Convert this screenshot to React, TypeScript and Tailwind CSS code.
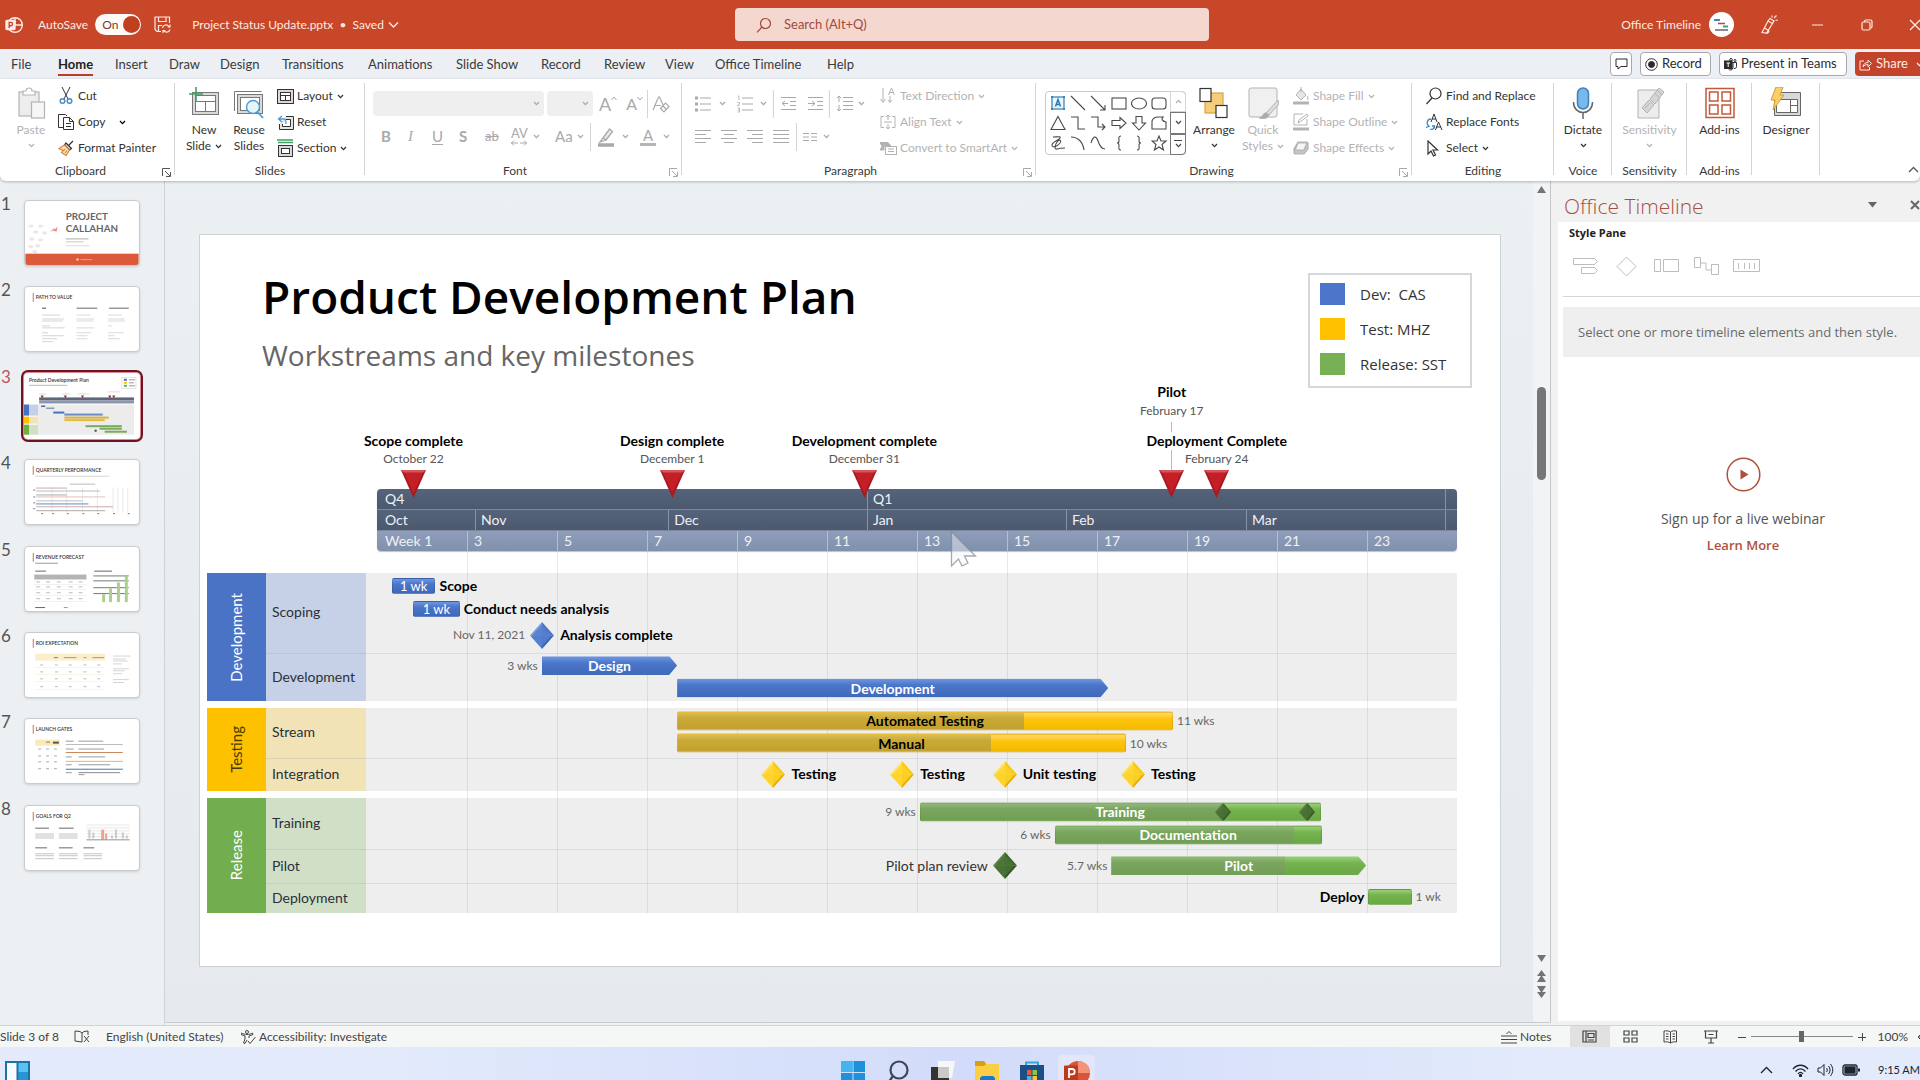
import React from "react";
import type { ReactNode } from "react";

/* ---------- small helpers ---------- */

function Ico({ w, h, sw = 1, className = "", children }: { w: number; h: number; sw?: number; className?: string; children: ReactNode }) {
  return (
    <svg
      width={w}
      height={h}
      viewBox={`0 0 ${w} ${h}`}
      fill="none"
      stroke="currentColor"
      strokeWidth={sw}
      className={`shrink-0 ${className}`}
      aria-hidden="true"
    >
      {children}
    </svg>
  );
}

const Chev = ({ className = "" }: { className?: string }) => (
  <Ico w={7} h={5} sw={1.3} className={className}>
    <path d="M1 1l2.5 2.6L6 1" />
  </Ico>
);

const Launcher = ({ dim }: { dim?: boolean }) => (
  <button aria-label="Dialog launcher" className={`absolute right-1 bottom-1 ${dim ? "text-[#a8a8a8]" : "text-[#555]"}`}>
    <Ico w={9} h={9}>
      <path d="M.5 8V.5H8M3 3l5 5M8.5 4v4.5H4" />
    </Ico>
  </button>
);

function Group({ label, className, launcher, children }: { label: string; className: string; launcher?: "on" | "dim"; children?: ReactNode }) {
  return (
    <section aria-label={label} className={`relative flex shrink-0 flex-col pt-1 ${className}`}>
      <div className="flex h-[79px]">{children}</div>
      <div className="h-[18px] text-center text-xs leading-[18px] text-[#3a3a3a]">{label}</div>
      {launcher && <Launcher dim={launcher === "dim"} />}
      <span className="absolute top-1 right-0 h-[92px] w-px bg-[#d4d4d4]" />
    </section>
  );
}

function Row({ icon, text, chev, dim }: { icon: ReactNode; text: string; chev?: boolean; dim?: boolean }) {
  return (
    <button className={`flex h-[26px] items-center whitespace-nowrap text-xs ${dim ? "text-[#b3b3b3]" : "text-[#333]"}`}>
      <span className="flex w-5 shrink-0 items-center">{icon}</span>
      {text}
      {chev && <Chev className="ml-1" />}
    </button>
  );
}

function Big({ icon, lines, chevLine, chevBelow, dim, className }: { icon: ReactNode; lines: string[]; chevLine?: boolean; chevBelow?: boolean; dim?: boolean; className: string }) {
  return (
    <button className={`flex shrink-0 flex-col items-center pt-1 text-xs leading-4 ${dim ? "text-[#b3b3b3]" : "text-[#333]"} ${className}`}>
      <span className="mb-[3px] flex h-8 items-center">{icon}</span>
      {lines.map((l, i) => (
        <span key={l} className="flex items-center whitespace-nowrap">
          {l}
          {chevLine && i === lines.length - 1 && <Chev className="ml-1" />}
        </span>
      ))}
      {chevBelow && <Chev className="mt-[5px]" />}
    </button>
  );
}

/* ---------- title bar ---------- */

function TitleBar() {
  return (
    <header className="grid h-[49px] shrink-0 grid-cols-[735fr_474fr_711fr] bg-[#c74728] text-xs text-[#fdeae4]">
      <div className="flex items-center pl-[5px]">
        <Ico w={18} h={18} sw={1.4}>
          <circle cx="10" cy="9" r="7.3" />
          <path d="M10 1.7V9h7.3" />
          <rect x="1" y="4.5" width="9" height="9" rx="1" fill="#fdeae4" />
          <path d="M4.2 12V6.4h1.7a1.6 1.6 0 010 3.3H4.2" stroke="#c74728" />
        </Ico>
        <span className="ml-[15px]">AutoSave</span>
        <button role="switch" aria-checked="true" className="ml-[7px] flex h-[21px] w-[46px] items-center justify-between rounded-full bg-[#fffaf8] pr-px pl-[7px] text-[#7c3a2a]">
          On
          <span className="size-[17px] rounded-full bg-[#c03f20]" />
        </button>
        <button aria-label="Save" className="ml-[13px]">
          <Ico w={18} h={18} sw={1.2}>
            <path d="M7 15.5H3L1 13.5V1h14.5v6M4.5 1v4.5H12V1M4.500 15.500V9.500H8" />
            <path d="M8.500 12a3.500 3.500 0 016.300-1.700M16 8.500v2.300h-2.300M16 13.300a3.500 3.500 0 01-6.200 1.400M9 17v-2.300h2.300" />
          </Ico>
        </button>
        <span className="ml-5">Project Status Update.pptx&nbsp; • &nbsp;Saved</span>
        <Ico w={11} h={8} sw={1.5} className="ml-1">
          <path d="M1 1.500l4.500 4.500L10 1.500" />
        </Ico>
      </div>
      <label className="mt-2 flex h-[33px] items-center rounded-[4px] bg-[#f4d8d0] pl-[21px] text-[#a3493c]">
        <Ico w={16} h={16} sw={1.2}>
          <circle cx="9.500" cy="6.500" r="5" />
          <path d="M6 10l-5 5.300" />
        </Ico>
        <input aria-label="Search" placeholder="Search (Alt+Q)" className="ml-3 w-full bg-transparent text-[13px] outline-none placeholder:text-[#a3493c]" />
      </label>
      <div className="flex items-center justify-end overflow-hidden">
        <span>Office Timeline</span>
        <span className="ml-2 flex size-[25px] items-center justify-center rounded-full bg-white">
          <Ico w={17} h={15}>
            <path d="M1 3h6" stroke="#3a8fc0" strokeWidth="2" />
            <path d="M5 6.500h7" stroke="#b9423a" strokeWidth="1.500" />
            <path d="M10 9.500h5" stroke="#41a07c" strokeWidth="2" />
            <path d="M2 13h13" stroke="#666" strokeWidth="1.500" />
          </Ico>
        </span>
        <button aria-label="Coming soon" className="ml-[26px]">
          <Ico w={18} h={20} sw={1.200}>
            <path d="M2 17.500L8 6l4.500 2.500-6 9.500zM4.500 13l4 2.500M5.500 18c2 1 4-1 3-3M8 6l2-2.500 4 2.500-1.500 2.500M12 2.500V.500M14 3l2.500-2.500M15.500 5.500l2.500-.5" />
          </Ico>
        </button>
        <button aria-label="Minimize" className="ml-[34px]">
          <Ico w={11} h={10}><path d="M0 5h11" /></Ico>
        </button>
        <button aria-label="Restore" className="ml-[38px]">
          <Ico w={12} h={12} sw={1.2}>
            <rect x="1" y="3" width="8" height="8" rx="1.500" />
            <path d="M3.500 3V2.200A1.400 1.400 0 015 1h4.500A1.500 1.500 0 0111 2.500V7.500a1.400 1.400 0 01-1.500 1.500" />
          </Ico>
        </button>
        <button aria-label="Close" className="-mr-px ml-9">
          <Ico w={12} h={12} sw={1.3}><path d="M1 1l10 10M11 1L1 11" /></Ico>
        </button>
      </div>
    </header>
  );
}

/* ---------- ribbon tabs ---------- */

const TABS: [string, string][] = [
  ["File", "w-[47px]"],
  ["Home", "w-[57px]"],
  ["Insert", "w-[54px]"],
  ["Draw", "w-[51px]"],
  ["Design", "w-[62px]"],
  ["Transitions", "w-[86px]"],
  ["Animations", "w-[88px]"],
  ["Slide Show", "w-[85px]"],
  ["Record", "w-[63px]"],
  ["Review", "w-[61px]"],
  ["View", "w-[50px]"],
  ["Office Timeline", "w-[112px]"],
  ["Help", "w-[50px]"],
];

function TabRow() {
  return (
    <div className="flex h-[30px] shrink-0 items-center justify-between overflow-hidden bg-[#eceff3] text-[13px] text-[#3b3b3b]">
      <nav className="flex pt-[3px] pl-[11px]">
        {TABS.map(([name, w]) => (
          <button key={name} className={`flex shrink-0 whitespace-nowrap ${w}`}>
            <span className={name === "Home" ? "border-b-2 border-[#b83b2e] font-bold text-[#222]" : "border-b-2 border-transparent"}>{name}</span>
          </button>
        ))}
      </nav>
      <div className="-mr-2 flex gap-2 text-[#2b2b2b]">
        <button aria-label="Comments" className="flex h-6 w-[22px] items-center justify-center rounded-[4px] border border-[#a9a9a9] bg-white">
          <Ico w={13} h={12}><path d="M1 1h11v7.500H6L3 11V8.500H1z" /></Ico>
        </button>
        <button className="flex h-6 items-center gap-1 rounded-[4px] border border-[#a9a9a9] bg-white px-1">
          <Ico w={13} h={13}>
            <circle cx="6.500" cy="6.500" r="5.800" />
            <circle cx="6.500" cy="6.500" r="3" fill="currentColor" />
          </Ico>
          <span className="w-11 text-left">Record</span>
        </button>
        <button className="flex h-6 w-[128px] items-center gap-1 rounded-[4px] border border-[#a9a9a9] bg-white px-1 whitespace-nowrap">
          <Ico w={13} h={13}>
            <rect x=".5" y="3" width="7.500" height="7.500" fill="currentColor" />
            <path d="M2.500 5h3.500M4.200 5v4" stroke="#fff" />
            <circle cx="7" cy="1.800" r="1.300" />
            <circle cx="11" cy="2.500" r="1" />
            <path d="M8 4.500h4.500v4a2 2 0 01-2.500 2M9 4.500v5.500a2.500 2.500 0 01-4.500 1" />
          </Ico>
          Present in Teams
        </button>
        <button className="flex h-6 w-[73px] items-center gap-1 rounded-[4px] bg-[#c4432b] px-1 text-[#fdeae4]">
          <Ico w={13} h={13}>
            <path d="M5 3H1v9h9.500V9M4 9c.3-3 2-4.500 5-4.500V2L12.500 5.500 9 8.800V6.500C7 6.500 5.300 7.200 4 9z" />
          </Ico>
          Share
          <Chev className="ml-1" />
        </button>
      </div>
    </div>
  );
}

/* ---------- ribbon ---------- */

const Sep = ({ className = "" }: { className?: string }) => <span className={`h-7 w-px shrink-0 bg-[#d4d4d4] ${className}`} />;

function Combo({ label, className }: { label: string; className: string }) {
  return (
    <span className={`flex h-[25px] shrink-0 items-center rounded-[4px] bg-[#efefef] pr-1 ${className}`}>
      <select aria-label={label} className="h-full min-w-0 flex-1 appearance-none bg-transparent outline-none" />
      <Chev />
    </span>
  );
}

const AlignIcon = ({ mid }: { mid: string }) => (
  <Ico w={16} h={15}>
    <path d={`M0 1.500h16M0 9.500h16 ${mid}`} />
  </Ico>
);

const SHAPES: ReactNode[] = [
  <><rect x="2" y="2" width="12" height="12" stroke="#3f87b8" fill="#eaf4fb" strokeWidth="1.300" /><path d="M5.500 11.500L8 4.500l2.500 7M6.300 9.500h3.400" stroke="#2b79ae" strokeWidth="1.500" /><path d="M1 1h2v2H1zM13 1h2v2h-2zM1 13h2v2H1zM13 13h2v2h-2z" fill="#3f87b8" stroke="none" /></>,
  <path d="M1 1l14 14" />,
  <path d="M1 1l14 14M15 10v5h-5" />,
  <rect x="1" y="3" width="14" height="11" />,
  <ellipse cx="8" cy="8.500" rx="7.500" ry="5.500" />,
  <rect x="1" y="3" width="14" height="11" rx="3" />,
  <path d="M8 1.500L15 14.500H1z" />,
  <path d="M1 2h7v12h7" />,
  <path d="M1 2h7v10h7M12 9l3 3-3 3" />,
  <path d="M1 5.500h8V2.500L15 8l-6 5.500v-3H1z" />,
  <path d="M5 1.500h6V8h3.500L8 15 1.500 8H5z" />,
  <path d="M1 14V6c1-3 3-4 6-4h5c-2 2-1 4 3 5v7z" />,
  <path d="M3 2c5 0 8-1 7 1S2 7 2 10s5 2 8-2c2-3-1-4-3-1s-3 8 0 7 6-1 8-1" />,
  <path d="M1 2c7 0 12 5 13 13" />,
  <path d="M1 8C3 1 6 0 8 6s4 8 7 8" />,
  <path d="M10 1C7 1 8 4 8 6s-2 2-2 2 2 0 2 2-1 5 2 5" />,
  <path d="M6 1c3 0 2 3 2 5s2 2 2 2-2 0-2 2 1 5-2 5" />,
  <path d="M8 1l2 5h5l-4 3.500 1.500 5.500L8 12l-4.500 3L5 9.500 1 6h5z" />,
];

function Ribbon() {
  return (
    <div className="z-10 flex h-[102px] shrink-0 rounded-b-md bg-white shadow-[0_1px_3px_rgba(0,0,0,0.25)]">
      <Group label="Clipboard" className="w-[175px] pr-[14px]" launcher="on">
        <Big
          className="ml-[10px] w-[42px]"
          dim
          chevBelow
          lines={["Paste"]}
          icon={
            <Ico w={30} h={32} sw={1.200}>
              <rect x="3" y="5" width="20" height="24" fill="#ededed" />
              <path d="M7 8V4h3c0-4 6-4 6 0h3v4z" fill="#fff" />
              <rect x="15.500" y="15" width="13" height="16" fill="#f6f6f6" />
            </Ico>
          }
        />
        <div className="ml-[6px]">
          <Row
            text="Cut"
            icon={
              <Ico w={16} h={18}>
                <path d="M4 0l6 12M12 0L6 12" />
                <g stroke="#4a8cc4" strokeWidth="1.500"><circle cx="4.500" cy="14" r="2.300" /><circle cx="11.500" cy="14" r="2.300" /></g>
              </Ico>
            }
          />
          <div className="flex">
            <Row
              text="Copy"
              icon={
                <Ico w={17} h={18}>
                  <path d="M5 14.500H.5V1.500h7L9 3" />
                  <path d="M5.500 4.500h6L15.500 8.500v8h-10zM11.500 4.500v4h4M8 10.500h5M8 13.500h5" />
                </Ico>
              }
            />
            <button aria-label="Copy options" className="ml-[14px]"><Chev /></button>
          </div>
          <Row
            text="Format Painter"
            icon={
              <Ico w={17} h={17} sw={1.200}>
                <path d="M15 1l-4 4M8 3l5.500 5.500-2 1.500L6.500 5z" fill="#ddd" />
                <path d="M6.500 5L1 8.500l4 2-1.500 2L8 15.500l3.500-5.500z" fill="#fbe3c4" stroke="#d78433" />
                <path d="M5 11l2-2M7 13l2-2.500" stroke="#d78433" />
              </Ico>
            }
          />
        </div>
      </Group>

      <Group label="Slides" className="w-[190px]">
        <Big
          className="ml-[8px] w-[42px]"
          lines={["New", "Slide"]}
          chevLine
          icon={
            <Ico w={32} h={32}>
              <rect x="4.500" y="5.500" width="26" height="22" fill="#d9d9d9" stroke="#777" />
              <rect x="7.500" y="8.500" width="20" height="16" fill="#fff" stroke="#777" />
              <path d="M7.500 14.500h20M17.500 14.500v10" stroke="#777" />
              <path d="M8 0v14M1 7h14" stroke="#3fa05f" strokeWidth="1.600" />
            </Ico>
          }
        />
        <Big
          className="w-[48px]"
          lines={["Reuse", "Slides"]}
          icon={
            <Ico w={32} h={32}>
              <path d="M1.500 24V4.500h27" stroke="#777" />
              <rect x="4.500" y="7.500" width="25" height="19" fill="#d9d9d9" stroke="#777" />
              <rect x="7.500" y="10.500" width="19" height="13" fill="#fff" stroke="#777" />
              <circle cx="20" cy="20" r="6.500" fill="#e6f4fb" stroke="#4d9ad0" strokeWidth="1.400" />
              <path d="M24.500 25l5.500 6" stroke="#4d9ad0" strokeWidth="1.800" />
            </Ico>
          }
        />
        <div className="ml-[4px]">
          <Row
            text="Layout"
            chev
            icon={<Ico w={17} h={15}><rect x=".5" y=".5" width="16" height="14" fill="#d9d9d9" /><rect x="3.500" y="3.500" width="10" height="8" fill="#fff" /><path d="M3.500 6.500h10M8.500 6.500v5" /></Ico>}
          />
          <Row
            text="Reset"
            icon={<Ico w={17} h={15}><path d="M9 1.500h7.500v13h-14V9" fill="#e4e4e4" /><path d="M9 4.500h4.500v7h-8V9" fill="#fff" /><path d="M5 1L1.500 4 5 7M1.500 4H7c2 0 2 3 2 5" stroke="#4d9ad0" strokeWidth="1.300" /></Ico>}
          />
          <Row
            text="Section"
            chev
            icon={<Ico w={17} h={18}><path d="M0 1h16M1 3.500h15" stroke="#3fa05f" strokeWidth="1.400" /><rect x="1.500" y="6.500" width="14" height="11" fill="#d9d9d9" /><rect x="4.500" y="9.500" width="8" height="5" fill="#fff" /></Ico>}
          />
        </div>
      </Group>

      <Group label="Font" className="w-[317px] pr-[25px] pl-2" launcher="dim">
        <div className="flex flex-col text-[#a9a9a9]">
          <div className="mt-1 flex h-[33px] items-center">
            <Combo label="Font name" className="w-[171px]" />
            <Combo label="Font size" className="ml-[3px] w-[46px]" />
            <button aria-label="Increase font size" className="ml-[6px] flex text-lg leading-6">A<Ico w={6} h={5} className="mt-1"><path d="M.5 4L3 1l2.500 3" /></Ico></button>
            <button aria-label="Decrease font size" className="ml-[9px] flex text-base leading-6">A<Ico w={6} h={5} className="mt-1"><path d="M.5 1L3 4l2.500-3" /></Ico></button>
            <Sep className="mx-1" />
            <button aria-label="Clear formatting">
              <Ico w={18} h={18} sw={1.200}><path d="M1 15L6.500 2h1L12 12M3 10.500h6" /><path d="M8.500 13.500l5-5.500 3.500 3.500-5 5.500z" fill="#fff" /><path d="M11 11l3.500 3.500" /></Ico>
            </button>
          </div>
          <div className="flex h-[33px] items-center pl-2 text-[15px]">
            <button className="w-[27px] text-left font-bold">B</button>
            <button className="w-[24px] text-left font-['Liberation_Serif'] italic">I</button>
            <button className="w-[27px] text-left underline underline-offset-2">U</button>
            <button className="w-[26px] text-left font-bold">S</button>
            <button className="w-[26px] text-left text-[13px] line-through">ab</button>
            <button aria-label="Character spacing" className="flex w-[44px] items-center gap-[5px]">
              <span className="flex flex-col items-center text-[13px] leading-[13px]">AV<Ico w={16} h={6}><path d="M0 3h7M3 .5L.5 3 3 5.500M9 3h7M13 .5L15.500 3 13 5.500" /></Ico></span>
              <Chev />
            </button>
            <button className="flex w-[35px] items-center gap-1">Aa<Chev /></button>
            <Sep />
            <button aria-label="Highlight" className="ml-[7px] flex items-center gap-2">
              <Ico w={16} h={20} sw={1.300}><path d="M5 11l6.500-9 3 2.500L8 13z" fill="#e8e8e8" /><path d="M5 11l-3 4 6-2" /><path d="M0 18h16" strokeWidth="3.500" /></Ico>
              <Chev />
            </button>
            <button aria-label="Font color" className="ml-[11px] flex items-center gap-[7px]">
              <span className="w-4 border-b-[3px] border-[#b5b5b5] text-center text-[15px] leading-4">A</span>
              <Chev />
            </button>
          </div>
        </div>
      </Group>

      <Group label="Paragraph" className="w-[354px] pr-[30px] pl-[13px]" launcher="dim">
        <div className="w-[185px] shrink-0 text-[#a9a9a9]">
          <div className="mt-1 flex h-[33px] items-center">
            <button aria-label="Bullets" className="flex w-[42px] items-center gap-[8px]">
              <Ico w={16} h={16}><path d="M5 2h11M5 8h11M5 14h11" /><path d="M0 2h3M0 8h3M0 14h3" strokeWidth="3" /></Ico><Chev />
            </button>
            <button aria-label="Numbering" className="flex w-[36px] items-center gap-[7px]">
              <Ico w={16} h={18}><path d="M5 3h11M5 9h11M5 15h11" /><path d="M1 1h1v4M.5 7.500h2v1.500l-2 1.500h2M.5 13h2v4h-2M1 15h1.500" strokeWidth=".8" /></Ico><Chev />
            </button>
            <Sep className="mr-[7px]" />
            <button aria-label="Decrease indent" className="w-[27px]"><Ico w={15} h={15}><path d="M0 1.500h15M9 5.500h6M9 9.500h6M0 13.500h15M7 7.500H1M4 5L1 7.500 4 10" /></Ico></button>
            <button aria-label="Increase indent"><Ico w={15} h={15}><path d="M0 1.500h15M9 5.500h6M9 9.500h6M0 13.500h15M0 7.500h7M4 5l3 2.500L4 10" /></Ico></button>
            <Sep className="mx-[6px]" />
            <button aria-label="Line spacing" className="flex items-center gap-[5px]">
              <Ico w={17} h={17}><path d="M7 2.500h10M7 6.500h10M7 10.500h10M7 14.500h10M3 1v6M1 3l2-2 2 2M3 10v6M1 14l2 2 2-2" /></Ico><Chev />
            </button>
          </div>
          <div className="flex h-[33px] items-center gap-[10px]">
            <button aria-label="Align left"><AlignIcon mid="M0 5.500h11M0 13.500h11" /></button>
            <button aria-label="Center"><AlignIcon mid="M3 5.500h10M3 13.500h10" /></button>
            <button aria-label="Align right"><AlignIcon mid="M5 5.500h11M5 13.500h11" /></button>
            <button aria-label="Justify"><AlignIcon mid="M0 5.500h16M0 13.500h16" /></button>
            <Sep className="-ml-[3px]" />
            <button aria-label="Columns" className="-ml-1 flex items-center gap-[6px]">
              <Ico w={14} h={10}><path d="M0 1.500h6M0 5h6M0 8.500h6M8 1.500h6M8 5h6M8 8.500h6" /></Ico><Chev />
            </button>
          </div>
        </div>
        <div>
          <Row dim chev text="Text Direction" icon={<Ico w={16} h={18}><path d="M3 1v14M.5 12L3 15.500 5.500 12M10 9v6M8 13l2 2.500 2-2.500M8.500 8L11.500 1l3 7M9.500 5.500h4" /></Ico>} />
          <Row dim chev text="Align Text" icon={<Ico w={16} h={16}><path d="M4 2.500H1v11h3M12 2.500h3v11h-3M4 8h8M8 1v5M6 3l2-2 2 2M8 15v-5M6 13l2 2 2-2" /></Ico>} />
          <Row dim chev text="Convert to SmartArt" icon={<Ico w={17} h={14}><path d="M0 1.500h8l3 3.500H4v4H0l2-3.500z" fill="#b3b3b3" /><rect x="5.500" y="5.500" width="11" height="8" fill="#fff" /><path d="M8 8h6M8 10.500h6" /></Ico>} />
        </div>
      </Group>

      <Group label="Drawing" className="w-[376px] pr-[34px] pl-[9px]" launcher="dim">
        <div className="mt-2 flex h-[64px] w-[141px] shrink-0 rounded-[4px] border border-[#c9c9c9] text-[#4a4a4a]">
          <div className="grid flex-1 grid-cols-6 place-items-center pt-px pl-[2px]">
            {SHAPES.map((s, i) => (
              <button key={i} aria-label={`Shape ${i + 1}`}><Ico w={17} h={17} sw={1.100}>{s}</Ico></button>
            ))}
          </div>
          <div className="-my-px -mr-px flex w-4 flex-col">
            <button aria-label="Scroll shapes up" className="flex flex-1 items-center justify-center rounded-tr-[4px] border border-[#d5d5d5] text-[#b5b5b5]"><Chev className="rotate-180" /></button>
            <button aria-label="Scroll shapes down" className="flex flex-1 items-center justify-center border border-[#777]"><Chev /></button>
            <button aria-label="More shapes" className="flex flex-1 flex-col items-center justify-center gap-[2px] rounded-br-[4px] border border-[#777]"><span className="h-px w-2 bg-[#4a4a4a]" /><Chev /></button>
          </div>
        </div>
        <Big
          className="ml-[5px] w-[46px]"
          lines={["Arrange"]}
          chevBelow
          icon={<Ico w={30} h={32} sw={1.200}><rect x="6" y="6" width="18" height="20" fill="#f5cd7b" stroke="#d9a441" /><rect x="1" y="1.500" width="11" height="13" fill="#fff" /><rect x="17" y="18.500" width="11" height="12" fill="#fff" /></Ico>}
        />
        <Big
          className="ml-[5px] w-[42px]"
          dim
          chevLine
          lines={["Quick", "Styles"]}
          icon={<Ico w={31} h={32}><rect x="1" y="1" width="28" height="29" rx="2" fill="#f0f0f0" /><path d="M30 13L18 26l3 2 10-11z" fill="#dcdcdc" /><path d="M18 26c-4 0-2 4-7 5 5 2 9 0 10-3z" fill="#aaa" /></Ico>}
        />
        <div className="ml-[9px]">
          <Row dim chev text="Shape Fill" icon={<Ico w={16} h={18}><path d="M3 8l5-6 5 6-5 5zM8 0v5M14 9c2 3 0 4 0 4" fill="#e6e6e6" /><path d="M0 16h16" strokeWidth="3" /></Ico>} />
          <Row dim chev text="Shape Outline" icon={<Ico w={16} h={18}><path d="M14 6v6H1V1h9M5 10l1-3 8-6 1 2-8 6z" /><path d="M0 16h16" strokeWidth="3" /></Ico>} />
          <Row dim chev text="Shape Effects" icon={<Ico w={16} h={15} sw={1.200}><path d="M5 1h9l1 1v6l-4 5H2L1 12V8z" fill="#c4c4c4" /><path d="M5 2h9l-3 7H2z" fill="#f5f5f5" /></Ico>} />
        </div>
      </Group>

      <Group label="Editing" className="w-[142px] pr-[14px] pl-[14px]">
        <div>
          <Row text="Find and Replace" icon={<Ico w={16} h={18} sw={1.200}><circle cx="9.500" cy="6.500" r="5.500" /><path d="M6 11l-5.500 6" /></Ico>} />
          <Row text="Replace Fonts" icon={<Ico w={17} h={18}><path d="M5 9L8 1l3 8M6 6h4M9.500 17l3-8 3.500 8M10.500 14h4.500" /><path d="M5 6c-4 0-5 5-2 7M1 10.500l2 3-3 1M4 16c2 1 4 0 4-2M6 13h2.500v2.500" stroke="#3f87c8" strokeWidth="1.300" /></Ico>} />
          <Row text="Select" chev icon={<Ico w={14} h={17} sw={1.200}><path d="M2 1v13l3-3 2.500 5 2-1L7 10h4.500z" /></Ico>} />
        </div>
      </Group>

      <Group label="Voice" className="w-[58px]">
        <Big className="w-full" lines={["Dictate"]} chevBelow icon={<Ico w={22} h={32} sw={1.500}><rect x="5.500" y="1" width="11" height="21" rx="5.500" fill="#79b8ea" stroke="#3c7fbd" /><path d="M1.500 15c0 14 19 14 19 0M11 26v6" stroke="#666" /></Ico>} />
      </Group>
      <Group label="Sensitivity" className="w-[75px]">
        <Big className="w-full" dim lines={["Sensitivity"]} chevBelow icon={<Ico w={30} h={32}><path d="M3 3h21v28H3z" fill="#ededed" /><path d="M7 21l7-8 5 5-7 8zM15 12l9-11 5 4-9 12z" fill="#d5d5d5" /><path d="M10 21l5-5M19 6l6 5M22 3l5 5" /></Ico>} />
      </Group>
      <Group label="Add-ins" className="w-[65px]">
        <Big className="w-full" lines={["Add-ins"]} icon={<Ico w={30} h={32} sw={1.500} className="text-[#c4593a]"><path d="M1 1.500h28v29H1z" /><path d="M4.500 5h8.500v9H4.500zM17 5h8.500v9H17zM4.500 18h8.500v9H4.500zM17 18h8.500v9H17z" /></Ico>} />
      </Group>
      <Group label="" className="w-[68px]">
        <Big className="w-full" lines={["Designer"]} icon={<Ico w={32} h={32}><path d="M4.500 5.500h26v23h-26z" fill="#d8d8d8" stroke="#666" /><path d="M6.500 12.500h21v13h-21z" fill="#fff" stroke="#666" /><path d="M20.500 12.500v13M20.500 18.500h7" stroke="#666" /><path d="M6 0h7l-3 8h4L3 23l2-10H1z" fill="#f9cf67" stroke="#d99a2b" /></Ico>} />
      </Group>
      <div className="flex flex-1 items-end justify-end pr-px pb-2 text-[#555]">
        <button aria-label="Collapse ribbon"><Ico w={11} h={7} sw={1.300}><path d="M1 6l4.500-4.500L10 6" /></Ico></button>
      </div>
    </div>
  );
}

/* ---------- slide thumbnails ---------- */

const ThumbTitle = ({ children }: { children: string }) => (
  <>
    <path d="M8 6v9" stroke="#c9704c" strokeWidth="1" />
    <text x="10.500" y="12" fontSize="5" fontWeight="600" fill="#333">{children}</text>
  </>
);

const line = (x: number, y: number, w: number, color = "#c4c4c4", h = 1) => <rect key={`${x}-${y}-${w}-${color}`} x={x} y={y} width={w} height={h} fill={color} />;

const THUMBS: { title: string; art: ReactNode }[] = [
  {
    title: "Project Callahan",
    art: (
      <>
        <text x="41" y="19" fontSize="10" fontWeight="700" fill="#666">PROJECT</text>
        <text x="41" y="31" fontSize="10" fontWeight="700" fill="#666">CALLAHAN</text>
        {[[3, 24], [13, 24], [8, 30], [17, 31], [4, 37], [13, 38], [3, 45], [10, 44], [7, 50]].map(([x, y]) => <rect key={`${x}${y}`} x={x} y={y} width="5" height="3" rx="1.500" fill="#e8e8e8" />)}
        <path d="M26 31l3-3 1 2 2-3-1 4M28 30l4 0" stroke="#e08c80" fill="none" />
        {line(41, 38, 23, "#aaa")}{line(41, 41, 18)}{line(41, 45, 24, "#dcdcdc")}
        <rect y="53.500" width="115" height="12" fill="#dc5a3a" />
        <circle cx="53" cy="59.500" r="1.300" fill="#f6c5b8" />{line(56, 59, 12, "#eb9c87")}
      </>
    ),
  },
  {
    title: "Path to value",
    art: (
      <>
        <ThumbTitle>PATH TO VALUE</ThumbTitle>
        {line(17, 21, 4, "#444")}{line(52, 21, 21, "#666")}{line(85, 21, 20, "#666")}
        {[28, 32, 34, 39, 41, 46, 49, 52, 55].map((y, i) => <g key={y}>{line(17, y, [18, 22, 21, 8, 23, 6, 22, 15, 11][i], "#d4d4d4")}{y !== 39 && line(52, y, [14, 18, 17, 10, 18, 15, 11, 11, 0][i], "#d9d9d9")}{y !== 41 && line(84, y, [14, 17, 17, 4, 10, 16, 7, 12, 0][i], "#d9d9d9")}</g>)}
      </>
    ),
  },
  {
    title: "Product Development Plan",
    art: (
      <>
        <text x="5" y="9" fontSize="5" fontWeight="600" fill="#333">Product Development Plan</text>
        {line(5, 11.500, 38, "#bbb")}
        <rect x="97" y="4" width="14" height="11" fill="#fff" stroke="#ccc" strokeWidth=".5" />
        {line(99, 5.500, 3, "#4472c4", 2)}{line(99, 8.500, 3, "#ffc000", 2)}{line(99, 11.500, 3, "#70ad47", 2)}{line(104, 6, 6, "#999")}{line(104, 9, 5, "#999")}{line(104, 12, 6, "#999")}
        {line(15, 24, 94, "#5c6779", 3)}{line(15, 27, 94, "#8a97ae", 3)}
        {[18, 41, 58, 85, 89].map((x) => <path key={x} d={`M${x - 1.500} 22h3l-1.500 3z`} fill="#b0202a" />)}
        {line(15, 20, 7, "#ddd")}{line(38, 20, 8, "#ddd")}{line(53, 20, 12, "#ddd")}{line(83, 18, 12, "#ddd")}
        {line(14, 31, 95, "#ececec", 30)}
        {line(0, 31, 5, "#4472c4", 11)}{line(5, 31, 9, "#c5d0e6", 11)}
        {line(0, 43, 5, "#ffc000", 7)}{line(5, 43, 9, "#f1e3b6", 7)}
        {line(0, 51, 5, "#70ad47", 10)}{line(5, 51, 9, "#d1dfc7", 10)}
        {line(17, 32, 4, "#55688f", 1.500)}{line(22, 34, 8, "#8a97ae", 1.500)}{line(29, 38, 11, "#4472c4", 2)}{line(40, 40, 38, "#6c8bc8", 2)}
        {line(40, 43, 44, "#d9b43a", 2)}{line(40, 45.500, 40, "#e3bd3c", 2)}
        {line(61, 51.500, 36, "#7bab5c", 2)}{line(75, 54, 22, "#7bab5c", 2)}{line(80, 57, 22, "#7bab5c", 2)}{line(70, 56, 2, "#37502a", 2)}
      </>
    ),
  },
  {
    title: "Quarterly performance",
    art: (
      <>
        <ThumbTitle>QUARTERLY PERFORMANCE</ThumbTitle>
        {line(10, 16, 75, "#c9c9c9", .8)}{line(45, 24, 26, "#bbb")}
        {[27, 42, 58, 73, 89, 94, 99, 104].map((x) => <path key={x} d={`M${x} 28v25`} stroke="#ddd" strokeWidth=".7" />)}
        {line(11, 28, 31, "#c9a9a5", 1)}{line(11, 31, 65, "#bbb", 1)}{line(11, 35, 31, "#aaa", 1)}{line(11, 37, 70, "#dcc3bf", 1)}{line(11, 41, 47, "#bbb", 1)}{line(11, 44, 53, "#6da0d8", 1.200)}{line(11, 47, 78, "#c9a9a5", 1)}{line(11, 51, 70, "#aaa", 1)}
        {[16, 27, 42, 58, 73, 89, 104].map((x) => line(x, 54, 2, "#777"))}
        {[30, 37, 43, 49].map((y) => line(8, y, 2, "#777"))}
      </>
    ),
  },
  {
    title: "Revenue forecast",
    art: (
      <>
        <ThumbTitle>REVENUE FORECAST</ThumbTitle>
        {line(10, 16, 23, "#999")}{line(10, 24, 11, "#666")}{line(70, 24, 18, "#666")}
        {line(9, 28, 53, "#b4b4b4", 5)}
        {[35, 40, 46, 52].map((y) => <g key={y}>{[11, 21, 32, 44, 54].map((x) => line(x, y, 4, "#bbb"))}{line(9, y + 3, 53, "#e5e5e5", .5)}</g>)}
        {[29, 34, 41, 47].map((y) => line(69, y, 36, "#4b5a50", .8))}
        {line(78, 48, 3, "#a9d08e", 8)}{line(85, 42, 3, "#a9d08e", 14)}{line(93, 36, 3, "#a9d08e", 20)}{line(101, 29, 3, "#a9d08e", 27)}
        {line(10, 61, 10, "#666")}{line(39, 61, 4, "#999")}
      </>
    ),
  },
  {
    title: "ROI expectation",
    art: (
      <>
        <ThumbTitle>ROI EXPECTATION</ThumbTitle>
        {line(10, 21, 71, "#fbeecb", 7)}{line(29, 24.500, 4, "#777")}{line(39, 24.500, 13, "#999")}{line(59, 24.500, 3, "#999")}{line(68, 24.500, 12, "#999")}
        {[32, 39, 46, 54].map((y) => <g key={y}>{[15, 30, 44, 59, 73].map((x) => line(x, y, 3, "#bbb"))}{line(10, y + 3, 71, "#f3ead2", .5)}</g>)}
        {[23, 26, 28, 31, 36, 38, 41, 47, 50].map((y, i) => line(89, y, [18, 13, 15, 9, 16, 12, 9, 16, 11][i], "#c9c9c9", .8))}
      </>
    ),
  },
  {
    title: "Launch gates",
    art: (
      <>
        <ThumbTitle>LAUNCH GATES</ThumbTitle>
        {line(10, 21, 25, "#fbe9b8", 6)}{line(21, 23, 4, "#777")}{line(28, 23, 6, "#555", 2)}
        {[30, 37, 43, 50].map((y) => <g key={y}>{[13, 21, 29].map((x) => line(x, y, 3, "#aaa"))}</g>)}
        {line(41, 22, 8, "#999")}{line(54, 22, 25, "#999")}{line(41, 25.500, 58, "#aaa", .8)}
        {line(41, 30, 8, "#999")}{line(54, 30, 26, "#999")}{line(41, 33.500, 58, "#c9855a", 1)}
        {line(41, 38, 6, "#999")}{line(54, 38, 27, "#999")}{line(41, 42.500, 58, "#e2bd4a", 1)}
        {line(41, 46, 6, "#999")}{line(54, 46, 32, "#999")}{line(41, 50.500, 58, "#4a72b4", 1)}
        {line(41, 54, 6, "#999")}{line(54, 54, 42, "#888")}{line(54, 56, 6, "#999")}
      </>
    ),
  },
  {
    title: "Goals for Q2",
    art: (
      <>
        <ThumbTitle>GOALS FOR Q2</ThumbTitle>
        {line(10, 22, 14, "#666")}{line(34, 22, 15, "#666")}{line(10, 42, 12, "#666")}{line(34, 42, 14, "#666")}{line(59, 42, 11, "#666")}
        {[28, 30, 32].map((y) => <g key={y}>{line(10, y, 19)}{line(34, y, 19)}</g>)}
        {[48, 50, 53].map((y) => <g key={y}>{line(10, y, 19)}{line(34, y, 19)}{line(59, y, 19)}</g>)}
        {[19, 22, 25, 28, 31].map((y) => line(62, y, 44, "#d5d5d5", .6))}
        {[64, 68, 87, 91, 98, 102].map((x, i) => line(x, 24 + (i % 3) * 3, 2, "#c9c9c9", 9 - (i % 3) * 3))}
        {line(77, 24, 3, "#e9a589", 10)}{line(81, 28, 2, "#e9a589", 6)}{line(62, 34, 44, "#777", .8)}
      </>
    ),
  },
];

function Thumbnails() {
  return (
    <aside className="w-[165px] shrink-0 overflow-hidden border-r border-[#cfd3d6] pt-[19px] pl-px">
      <ol className="grid h-[691px] grid-rows-8">
        {THUMBS.map((t, i) => (
          <li key={t.title} className="flex">
            <span className={`-mt-2 w-[23px] shrink-0 text-[17px] leading-[24px] ${i === 2 ? "text-[#c05060]" : "text-[#555]"}`}>{i + 1}</span>
            <button
              aria-label={t.title}
              className={`h-[66px] w-[116px] overflow-hidden rounded-[4px] bg-white ${i === 2 ? "shadow-[0_0_0_1px_#d98a92,0_0_0_3px_#6f1422]" : "border border-[#c9ccce] shadow-sm"}`}
            >
              <svg viewBox="0 0 115 65" className="block size-full" fontFamily="Lato, sans-serif">{t.art}</svg>
            </button>
          </li>
        ))}
      </ol>
    </aside>
  );
}

/* ---------- timeline slide ---------- */

const WEEKS = 24;
const at = (week: number) => `${(week / WEEKS) * 100}%`;

type Tone = "blue" | "yellow" | "green" | "dark";

type Item = {
  start: number;
  end?: number;
  tone: Tone;
  name: string;
  place?: "in" | "after" | "before";
  inside?: string;
  lead?: string;
  trail?: string;
  progress?: number;
  arrow?: boolean;
  marks?: number[];
  short?: boolean;
};

const BAR: Record<Tone, string> = {
  blue: "bg-linear-to-b from-[#6b92dc] from-5% via-[#4a76cb] via-35% to-[#3f69b8] text-white",
  yellow: "bg-linear-to-b from-[#ffd85c] from-5% via-[#ffc40c] via-35% to-[#f3b800] text-black",
  green: "bg-linear-to-b from-[#96cd73] from-5% via-[#74b34d] via-35% to-[#6ba746] text-white",
  dark: "",
};

const DONE: Record<Tone, string> = {
  blue: "",
  yellow: "bg-linear-to-b from-[#d9bd5a] via-[#cba935] via-35% to-[#c3a130]",
  green: "bg-linear-to-b from-[#93b87c] via-[#79a55d] via-35% to-[#719d56]",
  dark: "",
};

const FACES: Record<Tone, string[]> = {
  blue: ["#7598dc", "#5680cf", "#4a73c4", "#3c66b4"],
  yellow: ["#ffe36b", "#ffd42a", "#f8c808", "#e6b000"],
  green: ["#98cf75", "#7fbe58", "#6aa845", "#578f36"],
  dark: ["#5a8146", "#4a7237", "#3f662d", "#335523"],
};

function Diamond({ tone, w, h }: { tone: Tone; w: number; h: number }) {
  const [a, b, c, d] = FACES[tone];
  return (
    <svg width={w} height={h} viewBox="0 0 24 28" preserveAspectRatio="none" className="block" aria-hidden="true">
      <path d="M12 0L0 14h12z" fill={a} />
      <path d="M12 0l12 14H12z" fill={c} />
      <path d="M0 14l12 14V14z" fill={b} />
      <path d="M24 14L12 28V14z" fill={d} />
      <path d="M12 3L2.500 14 12 25l9.500-11z" fill={b} fillOpacity=".85" />
    </svg>
  );
}

const LABEL = "text-sm font-bold whitespace-nowrap text-black";
const NOTE = "text-xs whitespace-nowrap text-[#666]";

function GanttRow({ items, className }: { items: Item[]; className: string }) {
  return (
    <div className={`relative ${className}`}>
      {items.map((it) => {
        const milestone = it.end === undefined;
        const place = it.place ?? "in";
        return (
          <div
            key={it.name + it.start}
            className={milestone ? "absolute inset-y-0 flex w-0 items-center justify-center" : `absolute top-1/2 -translate-y-1/2 ${it.short ? "h-4" : "h-[19px]"}`}
            style={{ left: at(it.start), width: milestone ? undefined : at(it.end! - it.start) }}
          >
            {milestone ? (
              <span className="shrink-0"><Diamond tone={it.tone} w={24} h={27} /></span>
            ) : (
              <div
                className={`relative flex size-full items-center justify-center overflow-hidden ${BAR[it.tone]} ${
                  it.arrow ? "[clip-path:polygon(0_0,calc(100%-8px)_0,100%_50%,calc(100%-8px)_100%,0_100%)]" : "rounded-[2px] border border-black/10"
                }`}
              >
                {it.progress && <span className={`absolute inset-y-0 left-0 ${DONE[it.tone]}`} style={{ width: `${it.progress}%` }} />}
                {it.inside && <span className="relative text-[13px] leading-4 whitespace-nowrap">{it.inside}</span>}
                {place === "in" && <span className="relative text-sm leading-4 font-bold whitespace-nowrap">{it.name}</span>}
                {it.marks?.map((m) => (
                  <span key={m} className="absolute top-0 flex h-full w-0 items-center justify-center" style={{ left: `${((m - it.start) / (it.end! - it.start)) * 100}%` }}>
                    <span className="shrink-0"><Diamond tone="dark" w={16} h={19} /></span>
                  </span>
                ))}
              </div>
            )}
            {(it.lead || place === "before") && (
              <span className={`absolute inset-y-0 right-full flex items-center ${milestone ? "pr-[17px]" : "pr-1"} ${place !== "before" ? NOTE : it.tone === "dark" ? "text-sm whitespace-nowrap text-[#333]" : LABEL}`}>
                {it.lead ?? it.name}
              </span>
            )}
            {(it.trail || place === "after") && (
              <span className={`absolute inset-y-0 left-full flex items-center ${milestone ? "pl-[18px]" : "pl-1"} ${place === "after" ? LABEL : NOTE}`}>
                {it.trail ?? it.name}
              </span>
            )}
          </div>
        );
      })}
    </div>
  );
}

type Lane = {
  name: string;
  main: string;
  sub: string;
  subs: { name: string; className: string; rows: { className: string; items: Item[] }[] }[];
};

const LANES: Lane[] = [
  {
    name: "Development",
    main: "bg-[#4a73c5] text-white",
    sub: "bg-[#c6d1e7]",
    subs: [
      {
        name: "Scoping",
        className: "h-20",
        rows: [
          { className: "h-[25px]", items: [{ start: 0.33, end: 1.3, tone: "blue", name: "Scope", place: "after", inside: "1 wk", short: true }] },
          { className: "h-[21px]", items: [{ start: 0.8, end: 1.84, tone: "blue", name: "Conduct needs analysis", place: "after", inside: "1 wk", short: true }] },
          { className: "h-8", items: [{ start: 3.67, tone: "blue", name: "Analysis complete", place: "after", lead: "Nov 11, 2021" }] },
        ],
      },
      {
        name: "Development",
        className: "h-12",
        rows: [
          { className: "h-[23px]", items: [{ start: 3.66, end: 6.67, tone: "blue", name: "Design", arrow: true, lead: "3 wks" }] },
          { className: "h-[22px]", items: [{ start: 6.67, end: 16.25, tone: "blue", name: "Development", arrow: true }] },
        ],
      },
    ],
  },
  {
    name: "Testing",
    main: "bg-[#fec100] text-[#4a3a00]",
    sub: "bg-[#f1e3b5]",
    subs: [
      {
        name: "Stream",
        className: "h-[50px]",
        rows: [
          { className: "h-[25px]", items: [{ start: 6.67, end: 17.69, tone: "yellow", name: "Automated Testing", progress: 70, trail: "11 wks" }] },
          { className: "h-5", items: [{ start: 6.67, end: 16.64, tone: "yellow", name: "Manual", progress: 70, trail: "10 wks" }] },
        ],
      },
      {
        name: "Integration",
        className: "h-[33px]",
        rows: [
          {
            className: "h-[30px]",
            items: [
              { start: 8.81, tone: "yellow", name: "Testing", place: "after" },
              { start: 11.67, tone: "yellow", name: "Testing", place: "after" },
              { start: 13.95, tone: "yellow", name: "Unit testing", place: "after" },
              { start: 16.8, tone: "yellow", name: "Testing", place: "after" },
            ],
          },
        ],
      },
    ],
  },
  {
    name: "Release",
    main: "bg-[#72ae4e] text-white",
    sub: "bg-[#d1dfc7]",
    subs: [
      {
        name: "Training",
        className: "h-[51px]",
        rows: [
          { className: "h-[27px]", items: [{ start: 12.06, end: 20.97, tone: "green", name: "Training", progress: 76, lead: "9 wks", marks: [18.81, 20.69] }] },
          { className: "h-[19px]", items: [{ start: 15.06, end: 20.99, tone: "green", name: "Documentation", progress: 90, lead: "6 wks" }] },
        ],
      },
      {
        name: "Pilot",
        className: "h-[34px]",
        rows: [
          {
            className: "h-[31px]",
            items: [
              { start: 13.95, tone: "dark", name: "Pilot plan review", place: "before" },
              { start: 16.32, end: 21.98, tone: "green", name: "Pilot", progress: 68, arrow: true, lead: "5.7 wks" },
            ],
          },
        ],
      },
      {
        name: "Deployment",
        className: "h-[30px]",
        rows: [{ className: "h-[25px]", items: [{ start: 22.03, end: 22.99, tone: "green", name: "Deploy", place: "before", trail: "1 wk", short: true }] }],
      },
    ],
  },
];

const MILESTONES = [
  { week: 0.81, name: "Scope complete", date: "October 22" },
  { week: 6.56, name: "Design complete", date: "December 1" },
  { week: 10.83, name: "Development complete", date: "December 31" },
  { week: 17.66, name: "Pilot", date: "February 17", high: true },
  { week: 18.66, name: "Deployment Complete", date: "February 24" },
];

const MONTHS: [string, number, number][] = [["Oct", 0, 2.18], ["Nov", 2.18, 6.47], ["Dec", 6.47, 10.89], ["Jan", 10.89, 15.31], ["Feb", 15.31, 19.31], ["Mar", 19.31, 23.73], ["", 23.73, 24]];
const QUARTERS: [string, number, number][] = [["Q4", 0, 10.89], ["Q1", 10.89, 23.73], ["", 23.73, 24]];

function ScaleRow({ parts }: { parts: [string, number, number][] }) {
  return (
    <div className="flex h-[21px] border-b border-[#7b889d] bg-linear-to-b from-[#56647b] to-[#4b586e]">
      {parts.map(([name, from, to]) => (
        <span key={from} className={`shrink-0 truncate text-sm leading-5 ${from > 0 ? "border-l border-[#8792a6] pl-[5px]" : "pl-2"}`} style={{ width: at(to - from) }}>
          {name}
        </span>
      ))}
    </div>
  );
}

function Slide() {
  return (
    <article className="border border-[#cdd2d5] bg-white pb-[53px]">
      <div className="flex justify-between">
        <div className="pt-8 pl-[62px] font-['Open_Sans',sans-serif]">
          <h1 className="text-[46px] leading-[58px] font-semibold text-black">Product Development Plan</h1>
          <p className="mt-[7px] text-[28px] leading-[46px] text-[#666]">Workstreams and key milestones</p>
        </div>
        <ul className="mt-[38px] mr-[28px] flex h-[115px] w-[164px] flex-col gap-[13px] border-2 border-[#d5d7d9] px-[10px] pt-2 font-['Open_Sans',sans-serif] text-[15px] text-[#333]">
          <li className="flex h-[22px] items-center gap-[15px] whitespace-pre"><span className="h-[22px] w-[25px] bg-[#4a75c8]" />Dev:  CAS</li>
          <li className="flex h-[22px] items-center gap-[15px]"><span className="h-[22px] w-[25px] bg-[#ffc100]" />Test: MHZ</li>
          <li className="flex h-[22px] items-center gap-[15px] whitespace-nowrap"><span className="h-[22px] w-[25px] bg-[#77b055]" />Release: SST</li>
        </ul>
      </div>

      <div className="pr-[43px] pl-[7px]">
        <div className="relative ml-[170px] h-[101px]">
          {MILESTONES.map((m) => (
            <div key={m.name} className={`absolute flex w-0 flex-col items-center ${m.high ? "-top-[6px]" : "top-[43px]"}`} style={{ left: at(m.week) }}>
              <span className={`${LABEL} leading-5`}>{m.name}</span>
              <span className={`text-xs whitespace-nowrap text-[#555] ${m.high ? "leading-[18px]" : "leading-4"}`}>{m.date}</span>
              {m.high && <span className="my-[2px] mb-[18px] h-[10px] w-px bg-[#bbb]" />}
              {m.high && <span className="h-[20px] w-px shrink-0 bg-[#bbb]" />}
              <svg width="25" height="28" viewBox="0 0 25 28" className={`z-[3] shrink-0 ${m.high ? "" : "mt-[3px]"}`} aria-hidden="true">
                <path d="M0 0h25L12.500 28z" fill="#a81a22" />
                <path d="M3 2h19L12.500 23z" fill="#c41f27" />
                <path d="M0 0h25l-3 2.500H3z" fill="#d4555a" />
              </svg>
            </div>
          ))}
        </div>

        <div className="relative ml-[170px] rounded-[4px] text-[#eef1f6] shadow-[0_1px_1px_rgba(0,0,0,0.25)]">
          <div className="overflow-hidden rounded-[4px]">
            <ScaleRow parts={QUARTERS} />
            <ScaleRow parts={MONTHS} />
            <div className="grid h-5 grid-cols-12 bg-linear-to-b from-[#8f9dba] to-[#8091ac] text-sm leading-5">
              {Array.from({ length: 12 }, (_, i) => (
                <span key={i} className={i ? "border-l border-[#b4bfd2] pl-[6px]" : "pl-2"}>{i ? i * 2 + 1 : "Week 1"}</span>
              ))}
            </div>
          </div>
          <svg width="28" height="38" viewBox="0 0 28 38" className="absolute top-[41px] z-[4]" style={{ left: at(12.74) }} aria-hidden="true">
            <path d="M1.500 1.500v34.500l7-7 3.500 7 6-3-3.500-7h11z" fill="#f2f4f8" fillOpacity=".45" stroke="#7d8592" strokeOpacity=".7" strokeWidth="1.300" />
          </svg>
        </div>

        <div className="relative flex flex-col gap-[7px] pt-[22px]">
          <div className="absolute inset-y-0 right-0 left-[170px] z-[1] grid grid-cols-12">
            {Array.from({ length: 12 }, (_, i) => (
              <span key={i} className={i ? "border-l border-[#8a93a0]/20" : ""} />
            ))}
          </div>
          {LANES.map((lane) => (
            <section key={lane.name} className="flex bg-[#eeeeee]">
              <div className={`flex w-[59px] shrink-0 items-center justify-center text-[15px] ${lane.main}`}>
                <span className="rotate-180 [writing-mode:vertical-rl]">{lane.name}</span>
              </div>
              <div className="flex-1">
                {lane.subs.map((s, i) => (
                  <div key={s.name} className={`flex ${s.className}`}>
                    <div className={`flex w-[100px] shrink-0 items-center pb-[2px] pl-[6px] text-sm text-[#2a2f38] ${lane.sub} ${i ? "border-t border-[#8a93a0]/20" : ""}`}>{s.name}</div>
                    <div className={`relative z-[2] flex-1 pl-[11px] ${i ? "border-t border-[#8a93a0]/20" : ""}`}>
                      {s.rows.map((r, k) => <GanttRow key={k} items={r.items} className={r.className} />)}
                    </div>
                  </div>
                ))}
              </div>
            </section>
          ))}
        </div>
      </div>
    </article>
  );
}

/* ---------- right pane, status bar, taskbar ---------- */

function ScrollRail() {
  return (
    <div className="flex w-[18px] shrink-0 flex-col items-center border-r border-[#c4c7c9] bg-[#f1f3f4] pt-1 pb-6 text-[#747474]">
      <Ico w={9} h={8} className="mb-[194px]"><path d="M4.500 1L9 8H0z" fill="currentColor" stroke="none" /></Ico>
      <span className="h-[93px] w-[9px] rounded-full bg-[#767676]" />
      <span className="flex-1" />
      <Ico w={9} h={7} className="mb-2"><path d="M0 0h9L4.500 7z" fill="currentColor" stroke="none" /></Ico>
      <Ico w={9} h={12} className="mb-1"><path d="M4.500 0L9 6H0zM4.500 5L9 12H0z" fill="currentColor" stroke="none" /></Ico>
      <Ico w={9} h={12}><path d="M4.500 12L9 6H0zM4.500 7L9 0H0z" fill="currentColor" stroke="none" /></Ico>
    </div>
  );
}

function StylePane() {
  return (
    <aside className="flex w-[369px] shrink-0 flex-col overflow-hidden bg-[#f1f1f1] pb-1 pl-[7px] font-['Open_Sans',sans-serif]">
      <div className="flex h-[41px] items-center justify-between pt-[11px] pl-[6px] text-[#a8503f]">
        <h2 className="text-[21px] font-light">Office Timeline</h2>
        <div className="flex items-center gap-[33px] pb-1 text-[#666]">
          <button aria-label="Pane options"><Ico w={9} h={6}><path d="M0 0h9L4.500 5.500z" fill="currentColor" stroke="none" /></Ico></button>
          <button aria-label="Close pane"><Ico w={10} h={10} sw={2}><path d="M1 1l8 8M9 1L1 9" /></Ico></button>
        </div>
      </div>
      <div className="flex flex-1 flex-col bg-white pl-[5px]">
        <h3 className="mt-[3px] ml-[6px] text-[11px] leading-4 font-bold text-[#222]">Style Pane</h3>
        <div className="mt-[15px] mb-[20px] ml-[10px] flex h-[20px] items-center text-[#bdbdbd]">
          <button aria-label="Tasks" className="w-[43px]"><Ico w={26} h={18}><path d="M.5 1.500h21l3 3-3 3H.5zM8.500 10.500h13l3 3-3 3h-13z" /></Ico></button>
          <button aria-label="Milestones" className="w-[38px]"><Ico w={21} h={21}><path d="M10.500 1l9.500 9.500-9.500 9.500L1 10.500z" /></Ico></button>
          <button aria-label="Swimlanes" className="w-[40px]"><Ico w={26} h={14}><path d="M.5 .5h6v12h-6zM9.500 .5h15v12h-15z" /></Ico></button>
          <button aria-label="Dependencies" className="w-[39px]"><Ico w={26} h={20}><path d="M.5 1.500h6v10h-6zM17.500 8.500h7v10h-7zM7 7h5v7h5" /></Ico></button>
          <button aria-label="Timeband"><Ico w={28} h={14}><path d="M.5 .5h26v12h-26zM5.500 4v6M11.500 4v6M16.500 4v6M21.500 4v6" /></Ico></button>
        </div>
        <div className="h-px bg-[#d5d5d5]" />
        <p className="mt-[10px] bg-[#efefef] pl-[15px] text-[13px] leading-[50px] whitespace-nowrap text-[#6a6a6a]">Select one or more timeline elements and then style.</p>
        <div className="mt-[100px] flex flex-col items-center pl-[3px] text-[#b1503a]">
          <Ico w={35} h={35} sw={1.500}>
            <circle cx="17.500" cy="17.500" r="16.300" />
            <path d="M14.500 12.500v10l8-5z" fill="currentColor" stroke="none" />
          </Ico>
          <p className="mt-[15px] text-sm leading-6 text-[#555]">Sign up for a live webinar</p>
          <a href="#learn" className="text-[13px] leading-7 font-semibold">Learn More</a>
        </div>
      </div>
    </aside>
  );
}

function StatusBar() {
  return (
    <footer className="flex h-[22px] shrink-0 items-center overflow-hidden border-t border-[#d0d3d5] bg-[#f5f6f6] text-xs text-[#444]">
      <span className="w-[74px] shrink-0 whitespace-nowrap">Slide 3 of 8</span>
      <button aria-label="Spelling" className="w-8"><Ico w={16} h={13}><path d="M8 12L1 11V1l5 .5L8 3V12M8 3l2-1.500L14 1v4M10 6l5 6M15 6l-5 6" /></Ico></button>
      <span className="w-[135px] whitespace-nowrap">English (United States)</span>
      <button className="flex items-center gap-[3px] whitespace-nowrap">
        <Ico w={15} h={14}><circle cx="6" cy="2" r="1.500" /><path d="M.5 3c3 2 8 2 11 0l.5 1.500L8 6v2M4 6v3L2.500 13 4 13.500 6 10M.5 3L0 4.500 4 6M7 11l2 2.500L14.500 7" /></Ico>
        Accessibility: Investigate
      </button>
      <span className="flex-1" />
      <button className="mr-[18px] flex items-center gap-[3px]">
        <Ico w={16} h={14}><path d="M0 6h16M0 9.500h16M0 13h16M5.500 4L8 1.500 10.500 4" /></Ico>
        Notes
      </button>
      <button aria-label="Normal view" className="flex h-full w-10 items-center justify-center bg-[#e1e1e1]"><Ico w={15} h={13} sw={1.200}><path d="M1 1h13v11H1zM4 1v11M6 3.500h6v4H6zM6 10h6" /></Ico></button>
      <button aria-label="Slide sorter" className="ml-[13px]"><Ico w={15} h={13} sw={1.200}><path d="M1 1h5v4H1zM9 1h5v4H9zM1 8h5v4H1zM9 8h5v4H9z" /></Ico></button>
      <button aria-label="Reading view" className="ml-[25px]"><Ico w={15} h={14}><path d="M7.500 13V2C6 .7 3 .7 1 1v11c2-.3 5-.3 6.500 1 1.500-1.300 4.500-1.300 6-1V1c-2-.3-4.500-.3-6 1M3 4h2.500M3 6.500h2.500M3 9h2.500M9.500 4H12M9.500 6.500H12M9.500 9H12" /></Ico></button>
      <button aria-label="Slide show" className="ml-[26px]"><Ico w={14} h={14} sw={1.200}><path d="M0 1h14M1.500 1v7h11V1M7 8v5M4 13h6M4.500 4.500h5" /></Ico></button>
      <button aria-label="Zoom out" className="ml-5"><Ico w={8} h={8}><path d="M0 4.500h8" /></Ico></button>
      <input
        type="range"
        aria-label="Zoom"
        defaultValue={50}
        className="mx-[5px] h-3 w-[102px] appearance-none bg-[linear-gradient(#888,#888)] bg-[length:100%_1px] bg-center bg-no-repeat [&::-webkit-slider-thumb]:h-[11px] [&::-webkit-slider-thumb]:w-[5px] [&::-webkit-slider-thumb]:appearance-none [&::-webkit-slider-thumb]:bg-[#666]"
      />
      <button aria-label="Zoom in"><Ico w={8} h={8}><path d="M0 4.500h8M4.500 0v8" /></Ico></button>
      <span className="ml-3">100%</span>
      <button aria-label="Fit slide" className="-mr-2 ml-[10px]"><Ico w={10} h={10}><path d="M3 2L0 5l3 3M0 5h10" /></Ico></button>
    </footer>
  );
}

function Taskbar() {
  return (
    <footer className="grid h-[33px] shrink-0 grid-cols-[841fr_254fr_825fr] overflow-hidden bg-linear-to-r from-[#e2eafb] from-20% via-[#d2dcfa] via-50% to-[#e2eafb] to-80%">
      <div className="pt-[14px] pl-[5px]">
        <button aria-label="Widgets">
          <Ico w={25} h={24} sw={2}>
            <rect x="1" y="1" width="23" height="22" fill="#f8fbff" stroke="#1b74a8" />
            <path d="M12.500 2H23v9H12.500z" fill="#5ac2f0" stroke="none" />
            <path d="M12.500 11H23v11H12.500z" fill="#2a95d6" stroke="none" />
            <path d="M12.500 1v22" stroke="#1b74a8" />
          </Ico>
        </button>
      </div>
      <div className="flex items-start">
        <button aria-label="Start" className="mt-[14px] w-[47px]">
          <Ico w={24} h={24}><path d="M0 0h11.500v11H0zM12.500 0H24v11H12.500zM0 12h11.500v12H0zM12.500 12H24v12H12.500z" fill="#1d91dc" stroke="none" /><path d="M0 0h11.500v11H0z" fill="#43b4ee" stroke="none" /></Ico>
        </button>
        <button aria-label="Search" className="mt-[13px] w-[43px]">
          <Ico w={21} h={24} sw={2.200} className="text-[#3d4656]"><circle cx="11" cy="10" r="8.500" /><path d="M5 16l-5 7" /></Ico>
        </button>
        <button aria-label="Task view" className="mt-[14px] w-[43px]">
          <Ico w={24} h={22}><path d="M0 6h18v16H0z" fill="#333" stroke="none" /><path d="M7 0h17l-3 17H7z" fill="#f7f7f7" stroke="none" /><path d="M7 6h11v11H7z" fill="#c9c9c9" stroke="none" /></Ico>
        </button>
        <button aria-label="File Explorer" className="mt-[14px] w-[46px]">
          <Ico w={26} h={22}><path d="M1 0h9l2 3h13v19H1z" fill="#fbcf45" stroke="none" /><path d="M1 0h9l2 3-2 2H1z" fill="#d59e17" stroke="none" /><path d="M6 22v-5l2-2h11l2 2v5z" fill="#1d77c9" stroke="none" /></Ico>
        </button>
        <button aria-label="Microsoft Store" className="mt-[14px] w-[38px]">
          <Ico w={24} h={22}><path d="M6 5V1.500h12V5" stroke="#35a3dc" strokeWidth="2" /><path d="M0 4h24v18H0z" fill="#1b4f87" stroke="none" /><path d="M7 9h4.500v5H7z" fill="#e8563f" stroke="none" /><path d="M12.500 9H17v5h-4.500z" fill="#8cc63f" stroke="none" /><path d="M7 15h4.500v5H7z" fill="#3fb6ea" stroke="none" /><path d="M12.500 15H17v5h-4.500z" fill="#f9c535" stroke="none" /></Ico>
        </button>
        <button aria-label="PowerPoint" className="mt-2 flex h-[25px] w-[37px] justify-center rounded-t-[4px] bg-[#e3e6f8] pt-[6px]">
          <Ico w={26} h={26}>
            <circle cx="14" cy="12" r="12" fill="#d9553a" stroke="none" />
            <path d="M14 0a12 12 0 0112 12H14z" fill="#f2937a" stroke="none" />
            <rect x="0" y="4.500" width="14" height="16" rx="1" fill="#bd3a1f" stroke="none" />
            <path d="M5 17V8h3a2.700 2.700 0 010 5.400H5" stroke="#fff" strokeWidth="1.800" />
          </Ico>
        </button>
      </div>
      <div className="flex h-8 items-center justify-end pt-[14px] text-xs leading-4 text-[#1b2430]">
        <button aria-label="Hidden icons" className="mr-[19px]"><Ico w={13} h={8} sw={1.300}><path d="M1 7l5.500-5.500L12 7" /></Ico></button>
        <Ico w={17} h={13} sw={1.300} className="mr-2"><path d="M1 5c4-5 11-5 15 0M3.500 7.500c3-3.500 7-3.500 10 0M6 9.800c1.500-1.800 3.500-1.800 5 0" /><circle cx="8.500" cy="11.500" r="1" fill="currentColor" /></Ico>
        <Ico w={17} h={14} className="mr-2"><path d="M1 5h2.500L7 1.500v11L3.500 9H1zM9.500 5c1 1 1 3 0 4M11.500 3c2 2.500 2 5.500 0 8M13.500 1c3 4 3 8 0 12" /></Ico>
        <Ico w={18} h={12} sw={1.300} className="mr-[18px]"><rect x="1" y="1" width="14" height="10" rx="2" /><path d="M3 3h10v6H3z" fill="currentColor" /><path d="M17 4.500v3" strokeWidth="2" /></Ico>
        <span className="text-[11px] whitespace-nowrap">9:15 AM</span>
      </div>
    </footer>
  );
}

export default function App() {
  return (
    <div className="flex h-screen flex-col overflow-hidden bg-[#ecf0f3] font-['Lato',sans-serif]">
      <TitleBar />
      <TabRow />
      <Ribbon />
      <div className="flex min-h-0 flex-1">
        <Thumbnails />
        <div className="flex min-w-0 flex-1 flex-col">
          <main className="flex min-h-0 flex-1 border-b border-[#c9cdcf] bg-linear-to-b from-[#ebf0f3] to-[#e6e9ee]">
            <div className="min-w-0 flex-1 pt-[53px] pr-8 pl-[34px]">
              <Slide />
            </div>
            <ScrollRail />
          </main>
          <div className="h-[2px] bg-[#eef0f1]" />
        </div>
        <StylePane />
      </div>
      <StatusBar />
      <Taskbar />
    </div>
  );
}
